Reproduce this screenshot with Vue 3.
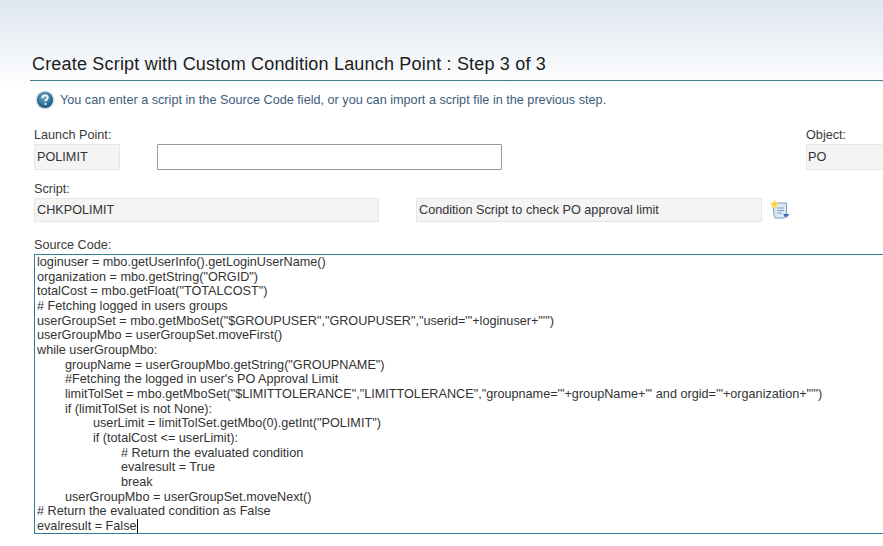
<script setup>
const code = `loginuser = mbo.getUserInfo().getLoginUserName()
organization = mbo.getString("ORGID")
totalCost = mbo.getFloat("TOTALCOST")
# Fetching logged in users groups
userGroupSet = mbo.getMboSet("$GROUPUSER","GROUPUSER","userid='"+loginuser+"'")
userGroupMbo = userGroupSet.moveFirst()
while userGroupMbo:
\tgroupName = userGroupMbo.getString("GROUPNAME")
\t#Fetching the logged in user's PO Approval Limit
\tlimitTolSet = mbo.getMboSet("$LIMITTOLERANCE","LIMITTOLERANCE","groupname='"+groupName+"' and orgid='"+organization+"'")
\tif (limitTolSet is not None):
\t\tuserLimit = limitTolSet.getMbo(0).getInt("POLIMIT")
\t\tif (totalCost <= userLimit):
\t\t\t# Return the evaluated condition
\t\t\tevalresult = True
\t\t\tbreak
\tuserGroupMbo = userGroupSet.moveNext()
# Return the evaluated condition as False
evalresult = False`;
</script>

<template>
  <div class="page">
    <header class="banner">
      <h1 class="title">Create Script with Custom Condition Launch Point : Step 3 of 3</h1>
    </header>

    <div class="content">
      <p class="hint">
        <svg class="help" width="20" height="20" viewBox="0 0 20 20">
          <defs>
            <radialGradient id="helpBall" cx="45%" cy="35%" r="70%">
              <stop offset="0" stop-color="#7fb4d2" />
              <stop offset="0.6" stop-color="#2f7199" />
              <stop offset="1" stop-color="#174f75" />
            </radialGradient>
          </defs>
          <circle cx="10" cy="10" r="9.5" fill="#d5dde4" />
          <circle cx="10" cy="10" r="8" fill="url(#helpBall)" />
          <path d="M7.3 8c0-1.8 1.3-2.6 2.8-2.6s2.7.8 2.7 2.2c0 1.9-2.2 1.9-2.2 3.6" fill="none" stroke="#fff" stroke-width="1.8" />
          <circle cx="10.5" cy="14" r="1.1" fill="#fff" />
        </svg>
        You can enter a script in the Source Code field, or you can import a script file in the previous step.
      </p>

      <div class="row first">
        <div class="field">
          <label>Launch Point:</label>
          <div class="box readonly lp">POLIMIT</div>
        </div>
        <div class="box input"></div>
        <div class="field obj">
          <label>Object:</label>
          <div class="box readonly objbox">PO</div>
        </div>
      </div>

      <div class="row second">
        <div class="field">
          <label>Script:</label>
          <div class="box readonly script">CHKPOLIMIT</div>
        </div>
        <div class="box readonly desc">Condition Script to check PO approval limit</div>
        <svg class="doc" width="20" height="20" viewBox="0 0 20 20">
          <path d="M3 3h13.500v11.500h-1.500l-.5 3.500H5l-1-2.500z" fill="#d9e8f3" stroke="#7d9dbb" />
          <path d="M7 8h7M7 10.500h7M7 13h5" stroke="#8aa5bf" />
          <path d="M13 14h6.500l-3.200 3.800z" fill="#3f67ad" />
          <path d="M4.500 0l1.200 3 3.100.2-2.400 2 .8 3.100-2.700-1.700-2.700 1.700.8-3.100-2.400-2 3.100-.2z" fill="#f4cf3f" stroke="#f9e27a" />
        </svg>
      </div>

      <label class="source-label">Source Code:</label>
      <div class="source"><pre class="code">{{ code }}<span class="caret"></span></pre></div>
    </div>
  </div>
</template>

<style scoped>
.page {
  width: 883px;
  height: 546px;
  overflow: hidden;
  background: linear-gradient(#dfe6ef 0, #eef2f7 45px, #ffffff 90px);
  font-family: "Liberation Sans", Arial, sans-serif;
  color: #333;
}

.banner {
  height: 81px;
  box-sizing: border-box;
  padding: 54px 0 0 2px;
  margin-left: 30px;
  border-bottom: 1px solid #3f7f8e;
}

.title {
  margin: 0;
  font-size: 18px;
  line-height: 20px;
  font-weight: normal;
  color: #1c1c1c;
  letter-spacing: 0.19px;
}

.content {
  width: 900px;
  padding-left: 34px;
}

.hint {
  display: flex;
  align-items: center;
  gap: 5px;
  margin: 9px 0 0 1px;
  height: 20px;
  font-size: 12.67px;
  color: #3d5c7c;
}

.row {
  display: flex;
}

.first {
  margin-top: 18px;
  align-items: flex-end;
}

.second {
  margin-top: 12px;
  align-items: flex-end;
}

.field {
  display: flex;
  flex-direction: column;
  gap: 2px;
}

label {
  font-size: 12.67px;
  line-height: 14px;
  color: #3a3a3a;
}

.box {
  box-sizing: border-box;
  font-size: 12.67px;
  color: #333;
  padding-left: 2px;
  display: flex;
  align-items: center;
}

.readonly {
  background: #f4f4f4;
  border: 1px solid #e6e6e6;
}

.lp {
  width: 86px;
  height: 26px;
  padding-bottom: 1px;
}

.input {
  width: 345px;
  height: 26px;
  margin-left: 37px;
  background: #fff;
  border: 1px solid #9a9a9a;
  border-radius: 1px;
}

.obj {
  margin-left: 304px;
}

.objbox {
  width: 90px;
  height: 26px;
  padding-left: 1px;
  padding-bottom: 1px;
}

.script {
  width: 345px;
  height: 24px;
}

.desc {
  width: 346px;
  height: 24px;
  margin-left: 37px;
}

.doc {
  margin-left: 8px;
  margin-bottom: 2px;
}

.source-label {
  display: block;
  margin-top: 16px;
}

.source {
  width: 860px;
  height: 280px;
  box-sizing: border-box;
  margin-top: 2px;
  padding: 0 2px;
  background: #fff;
  border: 1px solid #2f7f9a;
}

.code {
  margin: 0;
  font-family: "Liberation Sans", Arial, sans-serif;
  font-size: 12.67px;
  line-height: 14.65px;
  color: #333;
  white-space: pre;
  tab-size: 28px;
}

.caret {
  display: inline-block;
  width: 1px;
  height: 14px;
  background: #000;
  vertical-align: -3px;
}
</style>
